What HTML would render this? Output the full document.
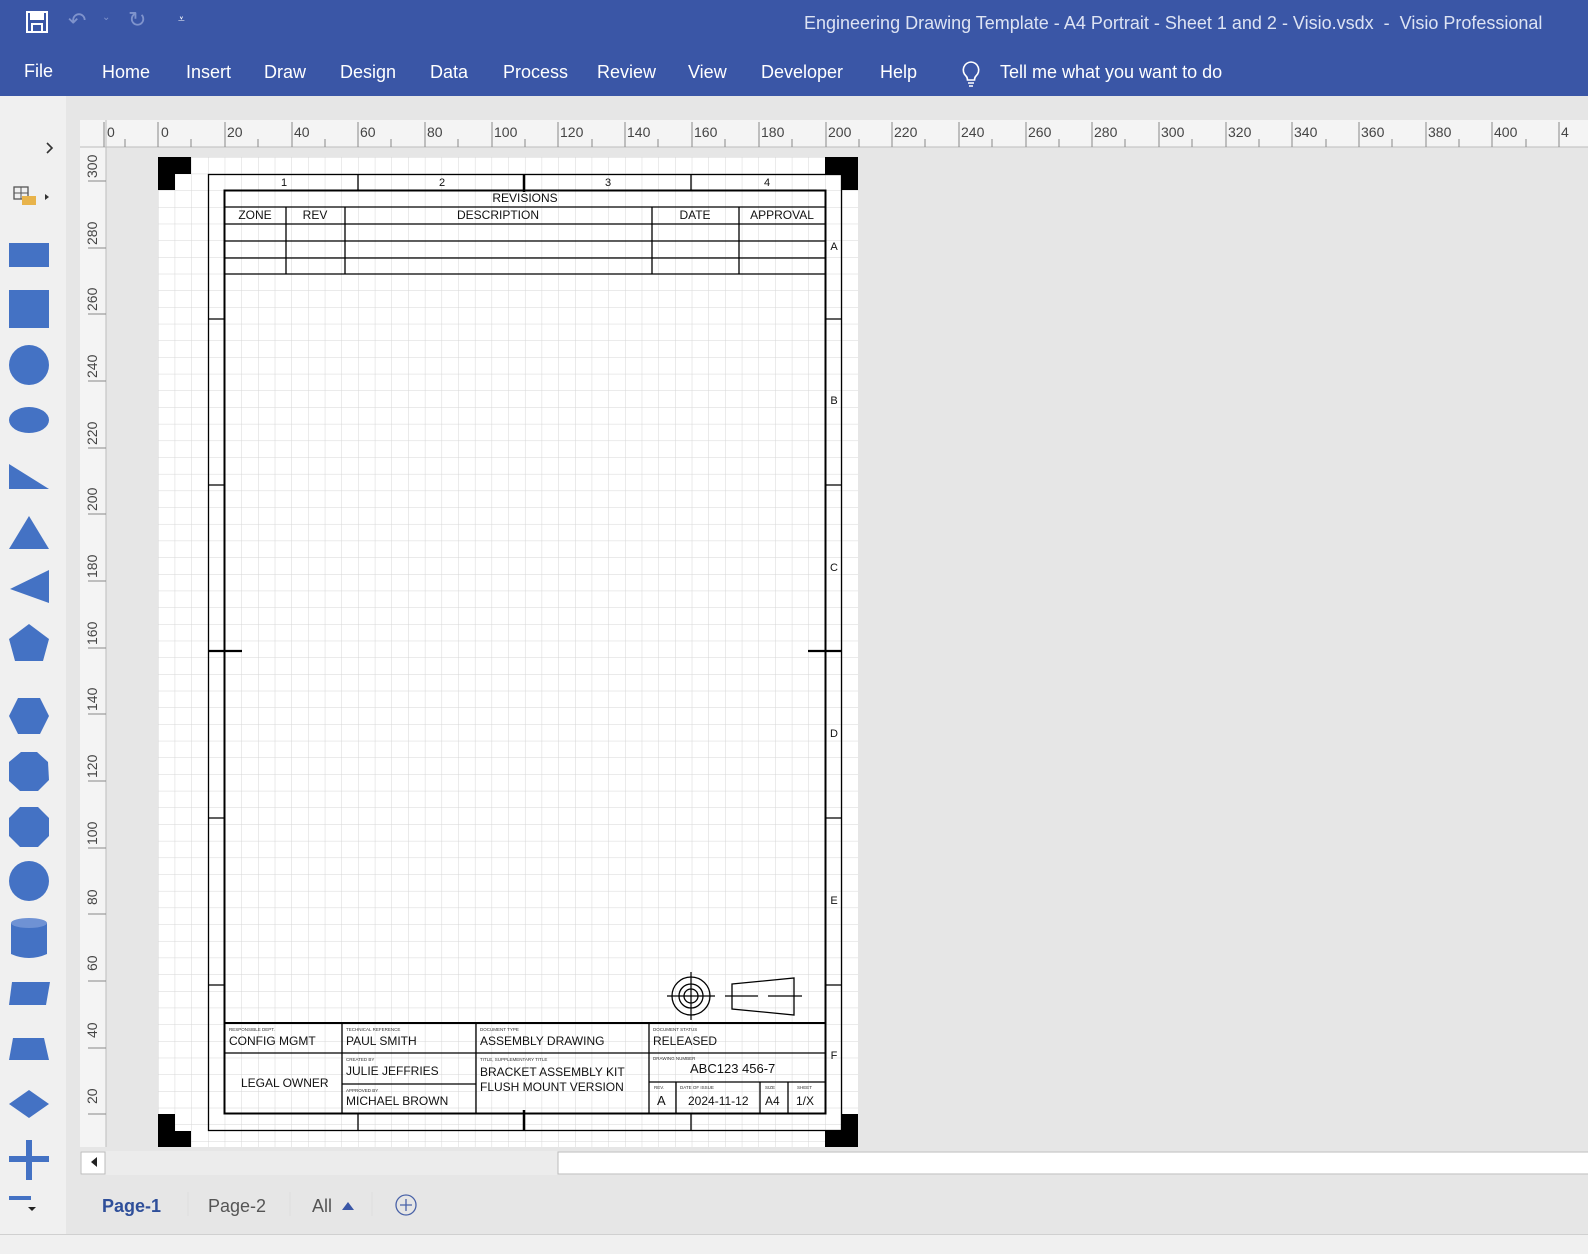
<!DOCTYPE html>
<html><head><meta charset="utf-8"><style>
body{margin:0;width:1588px;height:1253px;overflow:hidden;background:#e6e6e6;font-family:"Segoe UI","Liberation Sans",sans-serif;position:relative}
.top{position:absolute;left:0;top:0;width:1588px;height:96px;background:#3a56a6;color:#fff}
.t{position:absolute;font-size:18px;color:#fff;white-space:nowrap}
</style></head><body>
<div class="top">
<svg style="position:absolute;left:26px;top:11px" width="22" height="22" viewBox="0 0 22 22"><rect x="1" y="1" width="20" height="20" fill="none" stroke="#fff" stroke-width="2"/><rect x="4" y="2" width="14" height="7" fill="#fff"/><rect x="6" y="13" width="10" height="8" fill="none" stroke="#fff" stroke-width="2"/></svg>
<div class="t" style="left:68px;top:8px;color:#7f93cc;font-size:22px">↶</div>
<div class="t" style="left:102px;top:12px;color:#7f93cc;font-size:10px">⌄</div>
<div class="t" style="left:128px;top:7px;color:#7f93cc;font-size:22px">↻</div>
<div class="t" style="left:178px;top:12px;font-size:12px">⩡</div>
<div class="t" style="left:804px;top:13px;color:#dde3f3">Engineering Drawing Template - A4 Portrait - Sheet 1 and 2 - Visio.vsdx &nbsp;- &nbsp;Visio Professional</div>
<div class="t" style="left:24px;top:61px">File</div>
<div class="t" style="left:102px;top:62px">Home</div>
<div class="t" style="left:186px;top:62px">Insert</div>
<div class="t" style="left:264px;top:62px">Draw</div>
<div class="t" style="left:340px;top:62px">Design</div>
<div class="t" style="left:430px;top:62px">Data</div>
<div class="t" style="left:503px;top:62px">Process</div>
<div class="t" style="left:597px;top:62px">Review</div>
<div class="t" style="left:688px;top:62px">View</div>
<div class="t" style="left:761px;top:62px">Developer</div>
<div class="t" style="left:880px;top:62px">Help</div>
<svg style="position:absolute;left:960px;top:60px" width="22" height="28" viewBox="0 0 22 28"><path d="M11 2a8 8 0 0 0-5 14c1 1 1.5 2 1.5 4h7c0-2 .5-3 1.5-4a8 8 0 0 0-5-14z" fill="none" stroke="#fff" stroke-width="1.6"/><path d="M8 23h6M9 26h4" stroke="#fff" stroke-width="1.6"/></svg>
<div class="t" style="left:1000px;top:62px">Tell me what you want to do</div>
</div>
<div style="position:absolute;left:0;top:96px;width:66px;height:1140px;background:#f0f0f0"></div>
<div style="position:absolute;left:0;top:1234px;width:1588px;height:19px;background:#f0f0f0;border-top:1px solid #d0d0d0"></div>
<svg style="position:absolute;left:0;top:0" width="1588" height="1253" viewBox="0 0 1588 1253" font-family="Liberation Sans,sans-serif">
<defs>
<pattern id="g" x="158" y="157" width="16.68" height="16.68" patternUnits="userSpaceOnUse"><path d="M0 0H16.68M0 0V16.68" stroke="#d6d6d6" stroke-width="1" fill="none"/></pattern>
</defs>
<!-- left panel icons -->
<path d="M47 143l5 5-5 5" fill="none" stroke="#333" stroke-width="1.6"/>
<rect x="14" y="187" width="14" height="12" fill="none" stroke="#555" stroke-width="1.3"/><path d="M14 193h14M21 187v12" stroke="#555"/><rect x="22" y="196" width="14" height="9" fill="#e8b34a"/><path d="M45 194l4 3-4 3z" fill="#333"/>
<g fill="#4472c4">
<rect x="9" y="243" width="40" height="24"/>
<rect x="9" y="290" width="40" height="38"/>
<circle cx="29" cy="365" r="20"/>
<ellipse cx="29" cy="420" rx="20" ry="13"/>
<path d="M9 464L49 489H9z"/>
<path d="M29 516L49 549H9z"/>
<path d="M49 570V603L10 589z"/>
<path d="M29 624L49 639L43 661H15L9 639z"/>
<path d="M18 698H40L49 716L40 734H18L9 716z"/>
<path d="M21 752H37L48 762L49 780L38 791H20L9 781V762z"/>
<path d="M20 807H38L49 818V836L38 847H20L9 836V818z"/>
<circle cx="29" cy="881" r="20"/>
<path d="M11 923Q29 914 47 923V954Q29 962 11 954z"/><ellipse cx="29" cy="923" rx="18" ry="5" fill="#6f92d4"/>
<path d="M12 982H50L46 1005H9z"/>
<path d="M13 1038H44L49 1060H9z"/>
<path d="M29 1090L49 1104L29 1118L9 1104z"/>
<rect x="9" y="1156" width="40" height="6"/><rect x="26" y="1140" width="6" height="40"/>
<rect x="9" y="1196" width="22" height="4"/>
</g>
<path d="M28 1207h8l-4 4z" fill="#222"/>
<!-- rulers -->
<rect x="80" y="120" width="1508" height="27" fill="#f4f4f4"/>
<rect x="80" y="120" width="26" height="1027" fill="#f4f4f4"/>
<path d="M80 147H1588M106 120V1147" stroke="#bdbdbd"/>
<g stroke="#888" stroke-width="1">
<path d="M104 122V147M158 122V147M225 122V147M292 122V147M358 122V147M425 122V147M492 122V147M558 122V147M625 122V147M692 122V147M759 122V147M826 122V147M892 122V147M959 122V147M1026 122V147M1092 122V147M1159 122V147M1226 122V147M1292 122V147M1359 122V147M1426 122V147M1492 122V147M1559 122V147"/>
<path d="M125 139V147M191 139V147M258 139V147M325 139V147M391 139V147M458 139V147M525 139V147M592 139V147M658 139V147M725 139V147M792 139V147M859 139V147M925 139V147M992 139V147M1059 139V147M1125 139V147M1192 139V147M1259 139V147M1326 139V147M1392 139V147M1459 139V147M1526 139V147"/>
</g>
<g font-size="14" fill="#444">
<text x="107" y="137">0</text><text x="161" y="137">0</text><text x="227" y="137">20</text><text x="294" y="137">40</text><text x="360" y="137">60</text><text x="427" y="137">80</text><text x="494" y="137">100</text><text x="560" y="137">120</text><text x="627" y="137">140</text><text x="694" y="137">160</text><text x="761" y="137">180</text><text x="828" y="137">200</text><text x="894" y="137">220</text><text x="961" y="137">240</text><text x="1028" y="137">260</text><text x="1094" y="137">280</text><text x="1161" y="137">300</text><text x="1228" y="137">320</text><text x="1294" y="137">340</text><text x="1361" y="137">360</text><text x="1428" y="137">380</text><text x="1494" y="137">400</text><text x="1561" y="137">4</text>
</g>
<g stroke="#888">
<path d="M88 181H106M88 248H106M88 314H106M88 381H106M88 448H106M88 514H106M88 581H106M88 648H106M88 714H106M88 781H106M88 848H106M88 914H106M88 981H106M88 1048H106M88 1114H106"/>
</g>
<g font-size="14" fill="#444">
<text transform="translate(97 178) rotate(-90)">300</text><text transform="translate(97 245) rotate(-90)">280</text><text transform="translate(97 311) rotate(-90)">260</text><text transform="translate(97 378) rotate(-90)">240</text><text transform="translate(97 445) rotate(-90)">220</text><text transform="translate(97 511) rotate(-90)">200</text><text transform="translate(97 578) rotate(-90)">180</text><text transform="translate(97 645) rotate(-90)">160</text><text transform="translate(97 711) rotate(-90)">140</text><text transform="translate(97 778) rotate(-90)">120</text><text transform="translate(97 845) rotate(-90)">100</text><text transform="translate(97 905) rotate(-90)">80</text><text transform="translate(97 971) rotate(-90)">60</text><text transform="translate(97 1038) rotate(-90)">40</text><text transform="translate(97 1104) rotate(-90)">20</text>
</g>
<!-- scrollbar -->
<rect x="80" y="1151" width="1508" height="24" fill="#ececec"/>
<rect x="81" y="1152" width="24" height="22" fill="#fff" stroke="#bbb"/><path d="M97 1157v10l-6-5z" fill="#222"/>
<rect x="558" y="1152" width="1040" height="22" fill="#fff" stroke="#bbb"/>
<!-- page -->
<rect x="158" y="157" width="700" height="990" fill="#fff"/>
<rect x="158" y="157" width="700" height="990" fill="url(#g)"/>
<g fill="#000">
<path d="M158 157H191V174H175V190H158z"/>
<path d="M858 157H825V174H842V190H858z"/>
<path d="M158 1147H191V1131H175V1114H158z"/>
<path d="M858 1147H825V1131H842V1114H858z"/>
</g>
<g fill="none" stroke="#000">
<rect x="208.5" y="174.5" width="633" height="956" stroke-width="1.3"/>
<rect x="224.5" y="190.5" width="601" height="923" stroke-width="2"/>
<path d="M358 174V190M691 174V190M358 1114V1131M691 1114V1131" stroke-width="1.3"/>
<path d="M524 174V192M524 1110V1131" stroke-width="2.5"/>
<path d="M208 319H224M208 485H224M208 818H224M208 985H224M825 319H842M825 485H842M825 818H842M825 985H842" stroke-width="1.3"/>
<path d="M208 651H242M808 651H842" stroke-width="2.2"/>
<path d="M224 207H825M224 224H825M224 241H825M224 258H825M224 274H825" stroke-width="1.3"/>
<path d="M286 207V274M345 207V274M652 207V274M739 207V274" stroke-width="1.3"/>
<!-- title block -->
<path d="M224 1023H825" stroke-width="2"/>
<path d="M224 1053H825M342 1084H476M649 1082H825" stroke-width="1.3"/>
<path d="M342 1023V1114M476 1023V1114M649 1023V1114M676 1082V1114M760 1082V1114M788 1082V1114" stroke-width="1.3"/>
<!-- symbols -->
<circle cx="691" cy="996" r="19" stroke-width="1.3"/><circle cx="691" cy="996" r="12" stroke-width="1.3"/><circle cx="691" cy="996" r="7" stroke-width="1.3"/>
<path d="M667 996H715M691 972V1020" stroke-width="1.2"/>
<path d="M732 984L794 978V1015L732 1009z" stroke-width="1.3"/>
<path d="M725 996H758M768 996H802" stroke-width="1.2"/>
</g>
<g font-size="12" fill="#111" text-anchor="middle">
<text x="284" y="186" font-size="11">1</text><text x="442" y="186" font-size="11">2</text><text x="608" y="186" font-size="11">3</text><text x="767" y="186" font-size="11">4</text>
<text x="525" y="202">REVISIONS</text>
<text x="255" y="219">ZONE</text><text x="315" y="219">REV</text><text x="498" y="219">DESCRIPTION</text><text x="695" y="219">DATE</text><text x="782" y="219">APPROVAL</text>
<text x="834" y="250" font-size="11">A</text><text x="834" y="404" font-size="11">B</text><text x="834" y="571" font-size="11">C</text><text x="834" y="737" font-size="11">D</text><text x="834" y="904" font-size="11">E</text><text x="834" y="1059" font-size="11">F</text>
</g>
<g font-size="4.5" fill="#333">
<text x="229" y="1031">RESPONSIBLE DEPT.</text><text x="346" y="1031">TECHNICAL REFERENCE</text><text x="480" y="1031">DOCUMENT TYPE</text><text x="653" y="1031">DOCUMENT STATUS</text>
<text x="346" y="1061">CREATED BY</text><text x="480" y="1061">TITLE, SUPPLEMENTARY TITLE</text><text x="653" y="1060">DRAWING NUMBER</text>
<text x="346" y="1092">APPROVED BY</text><text x="654" y="1089">REV.</text><text x="680" y="1089">DATE OF ISSUE</text><text x="765" y="1089">SIZE</text><text x="797" y="1089">SHEET</text>
</g>
<g font-size="12" fill="#111">
<text x="229" y="1045">CONFIG MGMT</text><text x="346" y="1045">PAUL SMITH</text><text x="480" y="1045">ASSEMBLY DRAWING</text><text x="653" y="1045">RELEASED</text>
<text x="241" y="1087">LEGAL OWNER</text><text x="346" y="1075">JULIE JEFFRIES</text><text x="480" y="1076">BRACKET ASSEMBLY KIT</text><text x="480" y="1091">FLUSH MOUNT VERSION</text>
<text x="346" y="1105">MICHAEL BROWN</text>
<text x="690" y="1073" font-size="13">ABC123 456-7</text>
<text x="657" y="1105" font-size="13">A</text><text x="688" y="1105">2024-11-12</text><text x="765" y="1105">A4</text><text x="796" y="1105">1/X</text>
</g>
<!-- page tabs -->
<g font-family="Liberation Sans,sans-serif" font-size="18">
<text x="102" y="1212" fill="#2f4f9a" font-weight="bold">Page-1</text>
<text x="208" y="1212" fill="#555">Page-2</text>
<text x="312" y="1212" fill="#555">All</text>
</g>
<path d="M342 1210l6-8 6 8z" fill="#3a56a6"/>
<path d="M188 1192v24M290 1192v24M372 1192v24" stroke="#ddd"/>
<circle cx="406" cy="1205" r="10" fill="none" stroke="#4a63a8" stroke-width="1.3"/><path d="M400 1205h12M406 1199v12" stroke="#4a63a8" stroke-width="1.3"/>
</svg>
</body></html>
